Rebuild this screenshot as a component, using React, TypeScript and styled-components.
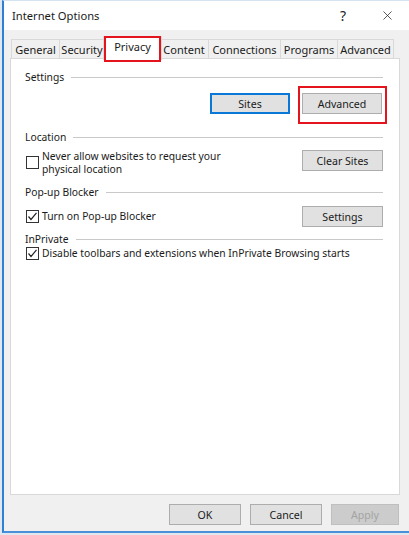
import styled, { createGlobalStyle } from "styled-components";
import { X } from "lucide-react";

const GlobalStyle = createGlobalStyle`
  html, body {
    margin: 0;
    padding: 0;
    background: #dfe7f1;
  }
  body {
    font-family: "Noto Sans", "Open Sans", sans-serif;
    font-size: 10.3px;
    color: #1a1a1a;
  }
`

const Frame = styled.div`
  width: 409px;
  height: 535px;
  padding-left: 2px;
  box-sizing: border-box;
  background: #dfe7f1;
`

const Window = styled.div`
  height: 533px;
  box-sizing: border-box;
  display: flex;
  flex-direction: column;
  background: #f0f0f0;
  border-left: 2px solid #2f7fd5;
  border-top: 1px solid #d4e2f2;
  border-bottom: 2px solid #4b8fd9;
`

const TitleBar = styled.div`
  height: 29px;
  flex: none;
  display: flex;
  align-items: center;
  padding-left: 8px;
  background: #ffffff;
  font-size: 11.2px;
`

const Title = styled.span`
  flex: 1;
`

const TitleButton = styled.span`
  width: 44px;
  display: flex;
  justify-content: center;
  align-items: center;
  font-size: 14px;
  color: #222;
`

const Body = styled.div`
  flex: 1;
  display: flex;
  flex-direction: column;
  padding: 6px 9px 0 6px;
`

const TabStrip = styled.div`
  display: flex;
  align-items: flex-end;
  height: 23px;
  padding-left: 1px;
  position: relative;
  z-index: 1;
`

const Tab = styled.div<{ $w: number; $active?: boolean }>`
  position: relative;
  width: ${p => p.$w}px;
  height: ${p => (p.$active ? 24 : 20)}px;
  margin: ${p => (p.$active ? "0 -2px -1px" : "0")};
  box-sizing: border-box;
  display: flex;
  align-items: center;
  justify-content: center;
  padding-bottom: ${p => (p.$active ? 4 : 0)}px;
  white-space: nowrap;
  font-size: 11px;
  background: ${p => (p.$active ? "#ffffff" : "#f0f0f0")};
  border: 1px solid #d9d9d9;
  border-bottom: ${p => (p.$active ? "none" : "1px solid #d9d9d9")};
  border-left-width: ${p => (p.$active ? 1 : 0)}px;
  z-index: ${p => (p.$active ? 2 : 0)};
  &:first-child {
    border-left-width: 1px;
  }
`

// red annotation box drawn over a control
const Mark = styled.span<{ $t: number; $r: number; $b: number; $l: number }>`
  position: absolute;
  top: ${p => p.$t}px;
  right: ${p => p.$r}px;
  bottom: ${p => p.$b}px;
  left: ${p => p.$l}px;
  border: 2px solid #e3141c;
  pointer-events: none;
`

const Panel = styled.div`
  height: 437px;
  margin-top: -1px;
  box-sizing: border-box;
  background: #ffffff;
  border: 1px solid #d9d9d9;
  padding: 11px 16px 0 14px;
  display: flex;
  flex-direction: column;
`

const GroupHeader = styled.div<{ $mt: number }>`
  display: flex;
  align-items: center;
  gap: 7px;
  height: 14px;
  margin-top: ${p => p.$mt}px;
  &::after {
    content: "";
    flex: 1;
    height: 1px;
    background: #c9c9c9;
  }
`

const Row = styled.div<{ $mt: number; $align?: string }>`
  display: flex;
  justify-content: space-between;
  align-items: ${p => p.$align ?? "center"};
  margin-top: ${p => p.$mt}px;
`

const ButtonRow = styled.div`
  display: flex;
  justify-content: flex-end;
  gap: 12px;
  margin-top: 9px;
  margin-right: 1px;
`

const Button = styled.button<{ $w: number; $focus?: boolean }>`
  position: relative;
  width: ${p => p.$w}px;
  height: 21px;
  padding: 0;
  font: inherit;
  font-size: 10.6px;
  color: #1a1a1a;
  background: #e1e1e1;
  border: 1px solid ${p => (p.$focus ? "#0a78d6" : "#adadad")};
  box-shadow: ${p => (p.$focus ? "inset 0 0 0 1px #0a78d6" : "none")};
  &:disabled {
    color: #a3a3a3;
    background: #cccccc;
    border-color: #bfbfbf;
  }
`

const CheckLabel = styled.label`
  display: flex;
  align-items: flex-start;
  gap: 3px;
  margin-left: 1px;
  line-height: 13px;
`

const Box = styled.span<{ $mt?: number }>`
  width: 13px;
  height: 13px;
  flex: none;
  margin-top: ${p => p.$mt ?? 0}px;
  box-sizing: border-box;
  border: 1px solid #333333;
  background: #ffffff;
  display: flex;
  align-items: center;
  justify-content: center;
`

const Footer = styled.div`
  display: flex;
  justify-content: flex-end;
  gap: 9px;
  padding: 9px 1px 0 0;
`

function Check({ checked, mt }: { checked?: boolean; mt?: number }) {
  return (
    <Box $mt={mt}>
      {checked && (
        <svg width="11" height="11" viewBox="0 0 11 11">
          <path d="M1.5 5.5 L4 8.5 L9.5 1.8" fill="none" stroke="#222" strokeWidth="1.2" />
        </svg>
      )}
    </Box>
  )
}

const tabs = [
  { name: "General", w: 49 },
  { name: "Security", w: 45 },
  { name: "Privacy", w: 59, active: true },
  { name: "Content", w: 49 },
  { name: "Connections", w: 72 },
  { name: "Programs", w: 57 },
  { name: "Advanced", w: 56 },
]

export default function App() {
  return (
    <Frame>
      <GlobalStyle />
      <Window>
        <TitleBar>
          <Title>Internet Options</Title>
          <TitleButton>?</TitleButton>
          <TitleButton><X size={15} strokeWidth={1.2} /></TitleButton>
        </TitleBar>
        <Body>
          <TabStrip>
            {tabs.map(t => (
              <Tab key={t.name} $w={t.w} $active={t.active}>
                {t.name}
                {t.active && <Mark $t={-1} $r={0} $b={-2} $l={0} />}
              </Tab>
            ))}
          </TabStrip>
          <Panel>
            <GroupHeader $mt={0}>Settings</GroupHeader>
            <ButtonRow>
              <Button $w={80} $focus>Sites</Button>
              <Button $w={80}>
                Advanced
                <Mark $t={-8} $r={-6} $b={-11} $l={-5} />
              </Button>
            </ButtonRow>

            <GroupHeader $mt={16}>Location</GroupHeader>
            <Row $mt={6} $align="flex-start">
              <CheckLabel>
                <Check mt={6} />
                <span>Never allow websites to request your<br />physical location</span>
              </CheckLabel>
              <Button $w={81}>Clear Sites</Button>
            </Row>

            <GroupHeader $mt={9}>Pop-up Blocker</GroupHeader>
            <Row $mt={7}>
              <CheckLabel>
                <Check checked />
                <span>Turn on Pop-up Blocker</span>
              </CheckLabel>
              <Button $w={81}>Settings</Button>
            </Row>

            <GroupHeader $mt={5}>InPrivate</GroupHeader>
            <Row $mt={1}>
              <CheckLabel>
                <Check checked />
                <span>Disable toolbars and extensions when InPrivate Browsing starts</span>
              </CheckLabel>
            </Row>
          </Panel>
          <Footer>
            <Button $w={72}>OK</Button>
            <Button $w={72}>Cancel</Button>
            <Button $w={68} disabled>Apply</Button>
          </Footer>
        </Body>
      </Window>
    </Frame>
  )
}
